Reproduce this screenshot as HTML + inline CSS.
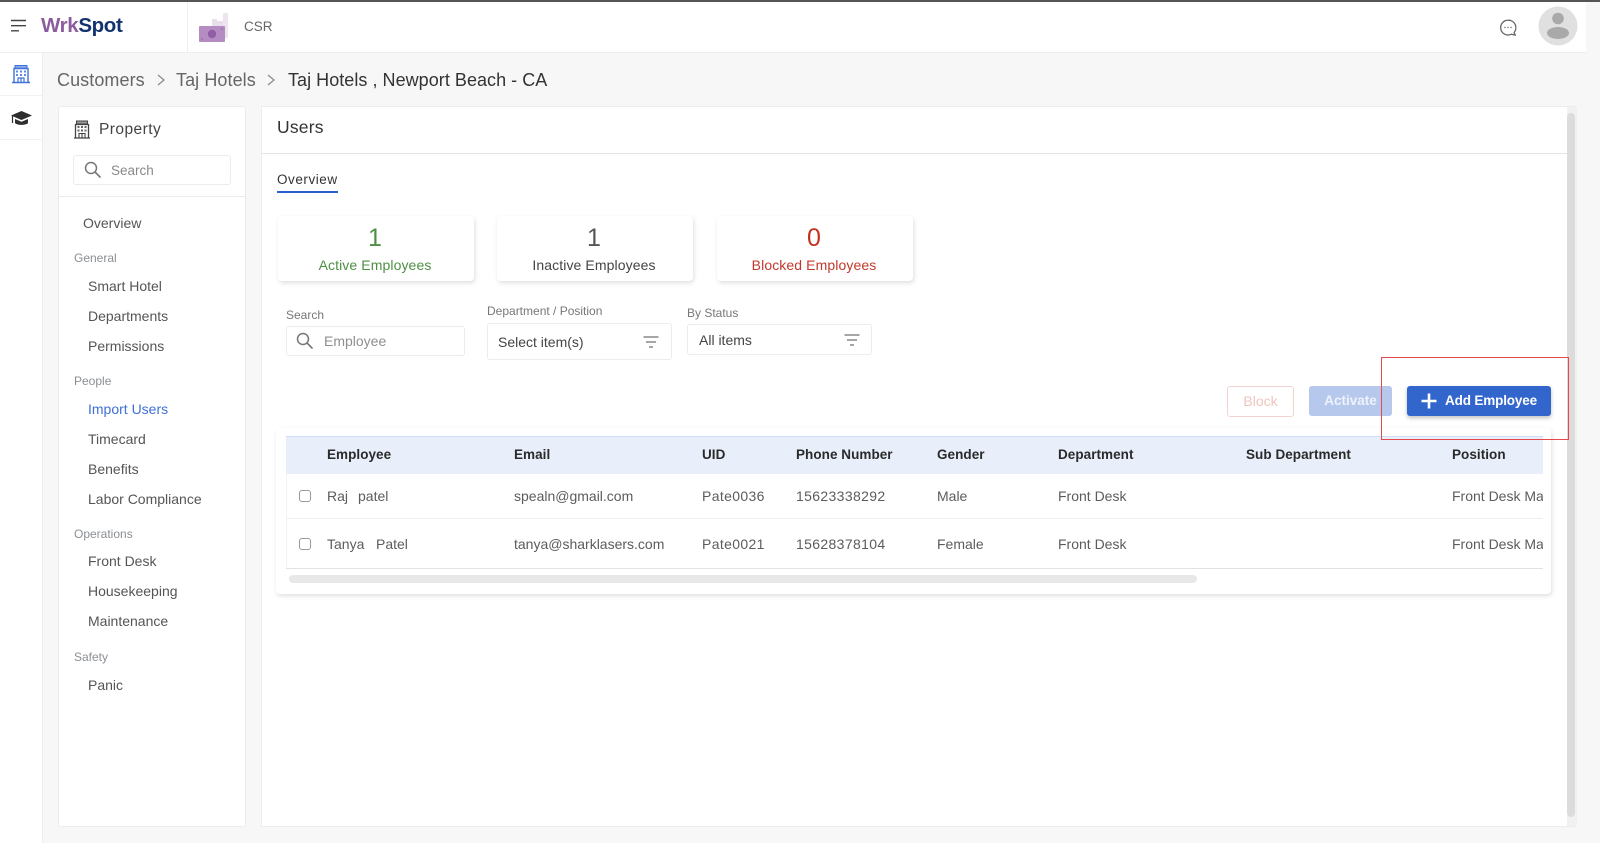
<!DOCTYPE html>
<html lang="en"><head><meta charset="utf-8"><title>Users</title>
<style>
html,body{margin:0;padding:0}
body{position:relative;width:1600px;height:843px;overflow:hidden;background:#f7f7f7;font-family:"Liberation Sans",sans-serif;color:#555}
.a,.t{position:absolute}
.t{white-space:nowrap;line-height:20px;font-size:14px;letter-spacing:0}
.box{box-sizing:border-box;background:#fff;border:1px solid #ececec;border-radius:3px}
.card{box-sizing:border-box;background:#fff;border-radius:4px;box-shadow:1px 2px 5px rgba(0,0,0,.13)}
.nav{color:#555}.grp{color:#8b8f94;font-size:12px}
.h{color:#2a2a2a;font-weight:bold;font-size:13.5px;letter-spacing:.05px}
.c{color:#5c5c5c;font-size:14px;letter-spacing:0}
.n{letter-spacing:.35px}
.num{font-size:25px;line-height:30px;text-align:center;width:196px}
.lab{text-align:center;width:196px;letter-spacing:.1px}
svg{position:absolute;display:block}
</style></head><body>
<!-- header -->
<div class="a" style="left:0;top:0;width:1586px;height:52px;background:#fff;border-bottom:1px solid #eee;box-sizing:content-box"></div>
<div class="a" style="left:0;top:0;width:1600px;height:2px;background:#555"></div>
<div class="a" style="left:187px;top:2px;width:1px;height:50px;background:#eee"></div>
<svg style="left:10px;top:18px" width="18" height="16" viewBox="0 0 18 16"><path d="M1 2.500h15M1 7.700h15M1 12.800h8" stroke="#444" stroke-width="1.400"/></svg>
<div class="t" style="left:41px;top:14px;font-size:20.500px;line-height:24px;letter-spacing:-.35px;font-weight:bold"><span style="color:#8c5c9f">Wrk</span><span style="color:#123270">Spot</span></div>
<svg style="left:198px;top:12px" width="32" height="32" viewBox="0 0 32 32"><rect x="14" y="7" width="5" height="18" fill="#e8dfeb"/><rect x="19" y="9" width="6" height="16" fill="#e8dfeb"/><rect x="25" y="1" width="5" height="25" fill="#ece5ee"/><rect x="1" y="14" width="26" height="16" rx="1" fill="#b48cc2"/><circle cx="14" cy="22" r="4.200" fill="#8f5ea6"/><circle cx="4" cy="27" r=".8" fill="#8f5ea6"/><circle cx="24" cy="17" r=".8" fill="#8f5ea6"/></svg>
<div class="t" style="left:244px;top:17px;color:#666;font-size:13.5px">CSR</div>
<svg style="left:1498px;top:18px" width="20" height="20" viewBox="0 0 20 20"><path d="M10 2.200a7.400 7.400 0 1 0 3.400 14l3.800.9-1.100-2.700A7.400 7.400 0 0 0 10 2.200z" fill="none" stroke="#666" stroke-width="1.300"/><circle cx="7" cy="9.500" r=".7" fill="#666"/><circle cx="10" cy="9.500" r=".7" fill="#666"/><circle cx="13" cy="9.500" r=".7" fill="#666"/></svg>
<svg style="left:1538px;top:6px" width="40" height="40" viewBox="0 0 40 40"><circle cx="20" cy="20" r="19.500" fill="#e0e0e0"/><circle cx="20" cy="12.500" r="5.800" fill="#a9a9a9"/><ellipse cx="20" cy="27" rx="11" ry="6" fill="#a9a9a9"/></svg>
<!-- rail -->
<div class="a" style="left:0;top:53px;width:42px;height:790px;background:#fff;border-right:1px solid #ececec"></div>
<div class="a" style="left:0;top:95px;width:42px;height:1px;background:#f3f3f3"></div>
<div class="a" style="left:0;top:139px;width:42px;height:1px;background:#f3f3f3"></div>
<svg style="left:11px;top:64px" width="20" height="20" viewBox="0 0 20 20"><path d="M4 1.500h12v3H4z" fill="#8aa9ea" stroke="#3f72d9"/><path d="M3 18.500V4.500h14v14M1 18.500h18" fill="none" stroke="#3f72d9" stroke-width="1.400"/><g fill="#5f8ae2"><rect x="5" y="6.500" width="2" height="2"/><rect x="9" y="6.500" width="2" height="2"/><rect x="13" y="6.500" width="2" height="2"/><rect x="5" y="10" width="2" height="2"/><rect x="9" y="10" width="2" height="2"/><rect x="13" y="10" width="2" height="2"/></g><path d="M7 18.500v-4.500h6v4.500M10 14v4.500" fill="none" stroke="#3f72d9" stroke-width="1.200"/></svg>
<svg style="left:10px;top:109px" width="23" height="18" viewBox="0 0 23 18"><path d="M11.500 2L22 6.500l-10.500 4.500L1 6.500z" fill="#2e2e2e"/><path d="M5 10v4c2 2.500 11 2.500 13 0v-4l-6.500 2.800z" fill="#2e2e2e"/><path d="M2.500 7v7" stroke="#2e2e2e" stroke-width="1.200"/></svg>
<!-- breadcrumb -->
<div class="t" style="left:57px;top:70px;font-size:18px;color:#666;letter-spacing:.08px">Customers</div>
<svg style="left:155px;top:73px" width="12" height="14" viewBox="0 0 12 14"><path d="M3 2l6 5-6 5" fill="none" stroke="#888" stroke-width="1.200"/></svg>
<div class="t" style="left:176px;top:70px;font-size:18px;color:#666;letter-spacing:.08px">Taj Hotels</div>
<svg style="left:265px;top:73px" width="12" height="14" viewBox="0 0 12 14"><path d="M3 2l6 5-6 5" fill="none" stroke="#888" stroke-width="1.200"/></svg>
<div class="t" style="left:288px;top:70px;font-size:18px;color:#333;letter-spacing:.04px">Taj Hotels , Newport Beach - CA</div>
<!-- property panel -->
<div class="a box" style="left:58px;top:106px;width:188px;height:721px"></div>
<svg style="left:73px;top:120px" width="18" height="19" viewBox="0 0 18 19"><path d="M3.500 1h11v3h-11z" fill="#999" stroke="#444"/><path d="M2.500 18V4.500h13V18M1 18h16" fill="none" stroke="#444" stroke-width="1.300"/><g fill="#666"><rect x="4.500" y="6" width="2" height="2"/><rect x="8" y="6" width="2" height="2"/><rect x="11.500" y="6" width="2" height="2"/><rect x="4.500" y="9.500" width="2" height="2"/><rect x="8" y="9.500" width="2" height="2"/><rect x="11.500" y="9.500" width="2" height="2"/></g><path d="M6 18v-4.500h6V18M9 13.500V18" fill="none" stroke="#444" stroke-width="1.100"/></svg>
<div class="t" style="left:99px;top:120px;font-size:15.500px;color:#444;letter-spacing:.45px">Property</div>
<div class="a box" style="left:73px;top:155px;width:158px;height:30px"></div>
<svg style="left:83px;top:160px" width="20" height="20" viewBox="0 0 20 20"><circle cx="8" cy="8" r="5.500" fill="none" stroke="#777" stroke-width="1.500"/><path d="M12 12l5.500 5.500" stroke="#777" stroke-width="1.600"/></svg>
<div class="t" style="left:111px;top:160.500px;color:#8a8a8a;font-size:13.5px">Search</div>
<div class="a" style="left:59px;top:196px;width:186px;height:1px;background:#ececec"></div>
<div class="t nav" style="left:83px;top:213px">Overview</div>
<div class="t grp" style="left:74px;top:248px">General</div>
<div class="t nav" style="left:88px;top:276px">Smart Hotel</div>
<div class="t nav" style="left:88px;top:306px">Departments</div>
<div class="t nav" style="left:88px;top:336px">Permissions</div>
<div class="t grp" style="left:74px;top:371px">People</div>
<div class="t" style="left:88px;top:399px;color:#3f6fd6">Import Users</div>
<div class="t nav" style="left:88px;top:429px">Timecard</div>
<div class="t nav" style="left:88px;top:459px">Benefits</div>
<div class="t nav" style="left:88px;top:489px">Labor Compliance</div>
<div class="t grp" style="left:74px;top:524px">Operations</div>
<div class="t nav" style="left:88px;top:551px">Front Desk</div>
<div class="t nav" style="left:88px;top:581px">Housekeeping</div>
<div class="t nav" style="left:88px;top:611px">Maintenance</div>
<div class="t grp" style="left:74px;top:647px">Safety</div>
<div class="t nav" style="left:88px;top:675px">Panic</div>
<!-- users panel -->
<div class="a" style="left:261px;top:106px;width:1315px;height:721px;box-sizing:border-box;background:#fff;border:1px solid #ececec;border-right:0"></div>
<div class="a" style="left:1567px;top:107px;width:10px;height:719px;background:#f1f1f1"></div>
<div class="a" style="left:1567px;top:113px;width:8px;height:704px;background:#dcdcdc;border-radius:4px"></div>
<div class="t" style="left:277px;top:117px;font-size:17.500px;color:#333;letter-spacing:.2px">Users</div>
<div class="a" style="left:262px;top:153px;width:1305px;height:1px;background:#e4e4e4"></div>
<div class="t" style="left:277px;top:170px;font-size:13.5px;color:#333;letter-spacing:.55px">Overview</div>
<div class="a" style="left:277px;top:191px;width:61px;height:2px;background:#2a5fd0"></div>
<!-- stats -->
<div class="a card" style="left:278px;top:216px;width:196px;height:65px"></div>
<div class="a card" style="left:497px;top:216px;width:196px;height:65px"></div>
<div class="a card" style="left:717px;top:216px;width:196px;height:65px"></div>
<div class="t num" style="left:277px;top:223px;color:#4f8f45">1</div>
<div class="t lab" style="left:277px;top:255px;color:#4f8f45">Active Employees</div>
<div class="t num" style="left:496px;top:223px;color:#555">1</div>
<div class="t lab" style="left:496px;top:255px;color:#444">Inactive Employees</div>
<div class="t num" style="left:716px;top:223px;color:#c2321f">0</div>
<div class="t lab" style="left:716px;top:255px;color:#c2392b">Blocked Employees</div>
<!-- filters -->
<div class="t" style="left:286px;top:305px;font-size:12px;color:#777">Search</div>
<div class="a box" style="left:286px;top:326px;width:179px;height:30px"></div>
<svg style="left:295px;top:331px" width="20" height="20" viewBox="0 0 20 20"><circle cx="8" cy="8" r="5.500" fill="none" stroke="#777" stroke-width="1.500"/><path d="M12 12l5.500 5.500" stroke="#777" stroke-width="1.600"/></svg>
<div class="t" style="left:324px;top:331px;color:#8f8f8f">Employee</div>
<div class="t" style="left:487px;top:301px;font-size:12px;color:#777">Department / Position</div>
<div class="a box" style="left:487px;top:323px;width:185px;height:37px"></div>
<div class="t" style="left:498px;top:332px;color:#444">Select item(s)</div>
<svg style="left:642px;top:335px" width="18" height="14" viewBox="0 0 18 14"><path d="M1.500 2h15M4 7h10M7 12h4" stroke="#888" stroke-width="1.400"/></svg>
<div class="t" style="left:687px;top:303px;font-size:12px;color:#777">By Status</div>
<div class="a box" style="left:687px;top:324px;width:185px;height:31px"></div>
<div class="t" style="left:699px;top:330px;color:#444">All items</div>
<svg style="left:843px;top:333px" width="18" height="14" viewBox="0 0 18 14"><path d="M1.500 2h15M4 7h10M7 12h4" stroke="#888" stroke-width="1.400"/></svg>
<!-- buttons -->
<div class="a" style="left:1227px;top:386px;width:67px;height:31px;box-sizing:border-box;background:#fff;border:1px solid #f2d3cf;border-radius:3px"></div>
<div class="t" style="left:1227px;top:391px;width:67px;text-align:center;color:#f0c4bd">Block</div>
<div class="a" style="left:1309px;top:386px;width:83px;height:30px;background:#b6c9ec;border-radius:3px"></div>
<div class="t" style="left:1309px;top:391px;width:83px;text-align:center;color:#eef2fb;font-weight:bold;font-size:13.5px;letter-spacing:0">Activate</div>
<div class="a" style="left:1407px;top:386px;width:144px;height:30px;background:#3366cc;border-radius:3px;box-shadow:0 2px 4px rgba(0,0,0,.25)"></div>
<svg style="left:1421px;top:393px" width="16" height="16" viewBox="0 0 16 16"><path d="M8 .5v15M.5 8h15" stroke="#fff" stroke-width="2.600"/></svg>
<div class="t" style="left:1445px;top:391px;color:#fff;font-weight:bold;font-size:13.5px;letter-spacing:-.15px">Add Employee</div>
<!-- table -->
<div class="a card" style="left:276px;top:428px;width:1275px;height:166px"></div>
<div class="a" style="left:286px;top:436px;width:1257px;height:38px;background:#e8effa;border-top:1px solid #cfdcf5;box-sizing:border-box"></div>
<div class="a" style="left:286px;top:518px;width:1257px;height:1px;background:#eee"></div>
<div class="a" style="left:286px;top:568px;width:1257px;height:1px;background:#e2e2e2"></div>
<div class="a" style="left:286px;top:474px;width:1px;height:94px;background:#f3f3f3"></div>
<div class="a" style="left:289px;top:575px;width:908px;height:8px;background:#e8e8e8;border-radius:4px"></div>
<div class="t h" style="left:327px;top:445px">Employee</div>
<div class="t h" style="left:514px;top:445px">Email</div>
<div class="t h" style="left:702px;top:445px">UID</div>
<div class="t h" style="left:796px;top:445px">Phone Number</div>
<div class="t h" style="left:937px;top:445px">Gender</div>
<div class="t h" style="left:1058px;top:445px">Department</div>
<div class="t h" style="left:1246px;top:445px">Sub Department</div>
<div class="t h" style="left:1452px;top:445px">Position</div>
<div class="a" style="left:299px;top:490px;width:12px;height:12px;box-sizing:border-box;border:1.500px solid #999;border-radius:3px;background:#fff"></div>
<div class="t c" style="left:327px;top:486px">Raj</div><div class="t c" style="left:358px;top:486px">patel</div>
<div class="t c n" style="left:514px;top:486px;letter-spacing:0">spealn@gmail.com</div>
<div class="t c n" style="left:702px;top:486px">Pate0036</div>
<div class="t c n" style="left:796px;top:486px">15623338292</div>
<div class="t c" style="left:937px;top:486px">Male</div>
<div class="t c" style="left:1058px;top:486px">Front Desk</div>
<div class="t c" style="left:1452px;top:486px;width:91px;overflow:hidden">Front Desk Manager</div>
<div class="a" style="left:299px;top:538px;width:12px;height:12px;box-sizing:border-box;border:1.500px solid #999;border-radius:3px;background:#fff"></div>
<div class="t c" style="left:327px;top:534px">Tanya</div><div class="t c" style="left:376px;top:534px">Patel</div>
<div class="t c" style="left:514px;top:534px">tanya@sharklasers.com</div>
<div class="t c n" style="left:702px;top:534px">Pate0021</div>
<div class="t c n" style="left:796px;top:534px">15628378104</div>
<div class="t c" style="left:937px;top:534px">Female</div>
<div class="t c" style="left:1058px;top:534px">Front Desk</div>
<div class="t c" style="left:1452px;top:534px;width:91px;overflow:hidden">Front Desk Manager</div>
<!-- red annotation -->
<div class="a" style="left:1381px;top:357px;width:188px;height:83px;box-sizing:border-box;border:1px solid #e5484d"></div>
</body></html>
